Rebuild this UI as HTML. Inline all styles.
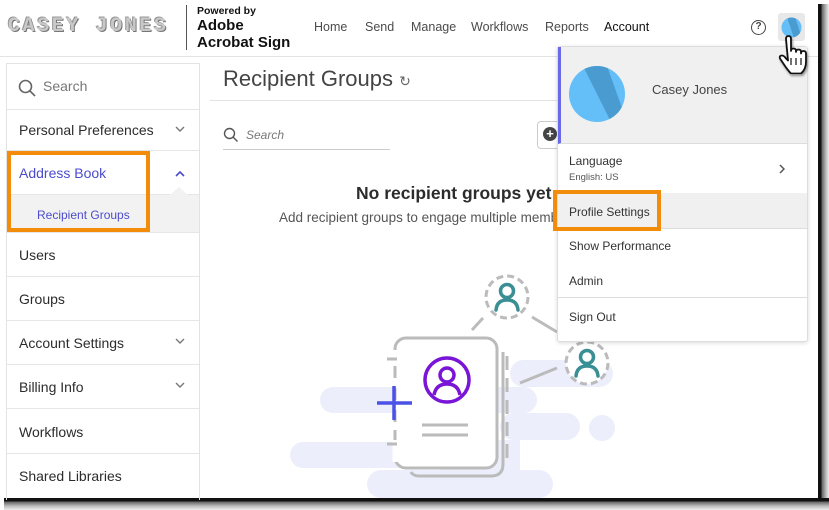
<!DOCTYPE html>
<html><head><meta charset="utf-8"><style>
*{box-sizing:border-box;margin:0;padding:0}
body{width:829px;height:510px;position:relative;overflow:hidden;background:#fff;font-family:"Liberation Sans",sans-serif;color:#2c2c2c}
.a{position:absolute}
.nav{font-size:12.5px;color:#4b4b4b;top:20px}
.row{position:absolute;left:7px;width:192px;height:44px;border-bottom:1px solid #e6e6e6;font-size:14px;padding:14px 0 0 12px;color:#2c2c2c}
.chev{position:absolute;right:14px;top:17px}
.dd{font-size:12px;color:#333;left:569px}
</style></head><body>
<div class="a" style="left:818px;top:4px;width:11px;height:506px;background:linear-gradient(90deg,#111 0,#111 3px,#666 4px,#bbb 8px,#eee 11px)"></div>
<div class="a" style="left:4px;top:498px;width:825px;height:12px;background:linear-gradient(180deg,#111 0,#111 3px,#666 4px,#bbb 8px,#eee 12px)"></div>
<div class="a" style="left:8px;top:15px;font:bold 20px 'Liberation Mono',monospace;letter-spacing:2.6px;color:#c8c8c8;text-shadow:1px 1px 0 #777,-1px -1px 0 #999">CASEY JONES</div>
<div class="a" style="left:186px;top:5px;width:1px;height:45px;background:#555"></div>
<div class="a" style="left:197px;top:5px;font-size:10.5px;font-weight:bold;color:#111">Powered by</div>
<div class="a" style="left:197px;top:17px;font-size:15px;font-weight:bold;line-height:17px;color:#111">Adobe<br>Acrobat Sign</div>
<div class="a nav" style="left:314px">Home</div>
<div class="a nav" style="left:365px">Send</div>
<div class="a nav" style="left:411px">Manage</div>
<div class="a nav" style="left:471px">Workflows</div>
<div class="a nav" style="left:545px">Reports</div>
<div class="a nav" style="left:604px;color:#111">Account</div>
<div class="a" style="left:751px;top:20px;width:15px;height:15px;border:1.5px solid #444;border-radius:50%;font-size:10px;text-align:center;line-height:12px;font-weight:bold;color:#444">?</div>
<div class="a" style="left:778px;top:13px;width:27px;height:28px;background:#e8e8e8;border-radius:3px"></div>
<svg class="a" style="left:781px;top:17px" width="21" height="21" viewBox="0 0 21 21"><clipPath id="c1"><circle cx="10.5" cy="10.5" r="10"/></clipPath><g clip-path="url(#c1)"><rect width="21" height="21" fill="#64bef8"/><polygon points="6,0 14,0 21,21 13,21" fill="#4a9bd0"/></g></svg>
<div class="a" style="left:0;top:56px;width:818px;height:1px;background:#e3e3e3"></div>
<!-- sidebar -->
<div class="a" style="left:6px;top:63px;width:194px;height:437px;border:1px solid #e3e3e3;border-bottom:none"></div>
<div class="row" style="top:64px;height:46px;color:#777;padding-left:36px">Search</div>
<svg class="a" style="left:18px;top:79px" width="18" height="18" viewBox="0 0 18 18"><circle cx="7.5" cy="7.5" r="6" fill="none" stroke="#666" stroke-width="1.6"/><path d="M12 12l5 5" stroke="#666" stroke-width="1.6"/></svg>
<div class="row" style="top:110px;height:41px;padding-top:12px">Personal Preferences<svg class="chev" style="top:16px" width="10" height="6"><path d="M1 1l4 4 4-4" fill="none" stroke="#777" stroke-width="1.4"/></svg></div>
<div class="row" style="top:151px;color:#4c4ccc">Address Book<svg class="chev" style="top:20px" width="10" height="6"><path d="M1 5l4-4 4 4" fill="none" stroke="#4c4ccc" stroke-width="1.6"/></svg></div>
<div class="a" style="left:7px;top:195px;width:192px;height:38px;background:#f2f2f2;border-bottom:1px solid #e6e6e6;font-size:12px;color:#4c4ccc;padding:13px 0 0 30px">Recipient Groups</div>
<div class="a" style="left:170px;top:187px;width:0;height:0;border-left:9px solid transparent;border-right:9px solid transparent;border-bottom:8px solid #f2f2f2"></div>
<div class="row" style="top:233px">Users</div>
<div class="row" style="top:277px">Groups</div>
<div class="row" style="top:321px">Account Settings<svg class="chev" width="10" height="6"><path d="M1 1l4 4 4-4" fill="none" stroke="#777" stroke-width="1.4"/></svg></div>
<div class="row" style="top:365px">Billing Info<svg class="chev" width="10" height="6"><path d="M1 1l4 4 4-4" fill="none" stroke="#777" stroke-width="1.4"/></svg></div>
<div class="row" style="top:410px">Workflows</div>
<div class="row" style="top:454px;border:none">Shared Libraries</div>
<div class="a" style="left:7px;top:151px;width:143px;height:81px;border:4px solid #f38b0b"></div>
<!-- main -->
<div class="a" style="left:223px;top:66px;font-size:22px;color:#444">Recipient Groups <span style="font-size:14px;color:#666">&#8635;</span></div>
<div class="a" style="left:210px;top:100px;width:350px;height:1px;background:#e3e3e3"></div>
<svg class="a" style="left:223px;top:127px" width="16" height="16" viewBox="0 0 16 16"><circle cx="6.5" cy="6.5" r="5" fill="none" stroke="#555" stroke-width="1.4"/><path d="M10 10l4.5 4.5" stroke="#555" stroke-width="1.4"/></svg>
<div class="a" style="left:246px;top:128px;font-size:12px;font-style:italic;color:#777">Search</div>
<div class="a" style="left:223px;top:149px;width:167px;height:1px;background:#ccc"></div>
<div class="a" style="left:537px;top:121px;width:24px;height:28px;border:1px solid #ccc;border-radius:4px 0 0 4px"></div>
<div class="a" style="left:543px;top:127px;width:14px;height:14px;border-radius:50%;background:#444;color:#fff;font-size:13px;line-height:14px;text-align:center;font-weight:bold">+</div>
<div class="a" style="left:356px;top:183px;font-size:17.5px;font-weight:bold;color:#2c2c2c">No recipient groups yet</div>
<div class="a" style="left:279px;top:210px;font-size:13.5px;color:#555">Add recipient groups to engage multiple memb</div>
<!-- illustration (page coords) -->
<svg class="a" style="left:280px;top:260px" width="340" height="240" viewBox="280 260 340 240">
<g fill="#eceefb">
<rect x="320" y="387" width="217" height="26" rx="13"/><rect x="290" y="442" width="177" height="26" rx="13"/><rect x="367" y="470" width="186" height="28" rx="14"/><rect x="510" y="360" width="103" height="27" rx="13.5"/><rect x="500" y="413" width="80" height="27" rx="13.5"/><circle cx="602" cy="428" r="13"/><rect x="440" y="440" width="80" height="30"/>
</g>
<path d="M472 330 L483 318 M532 317 L557 332 M520 383 L557 368" stroke="#bbb" stroke-width="3"/>
<circle cx="507" cy="297" r="21" fill="#fff" stroke="#bbb" stroke-width="3" stroke-dasharray="7 4"/>
<circle cx="587" cy="363" r="21" fill="#fff" stroke="#bbb" stroke-width="3" stroke-dasharray="7 4"/>
<g fill="none" stroke="#3a8f95" stroke-width="3.5" stroke-linecap="round"><circle cx="507" cy="291" r="6.5"/><path d="M496 310 q1-10 11-10 q10 0 11 10"/><circle cx="587" cy="357" r="6.5"/><path d="M576 376 q1-10 11-10 q10 0 11 10"/></g>
<path d="M503 352 v112 q0 12-12 12 h-72 q-6 0-8-4" fill="none" stroke="#bbb" stroke-width="3"/>
<rect x="395" y="338" width="102" height="130" rx="11" fill="#fff" stroke="#bbb" stroke-width="3"/>
<path d="M395 350 v112" stroke="#fff" stroke-width="5"/>
<path d="M387 359 h10 M387 444 h10 M395 366 v12 M395 388 v12 M395 410 v12 M395 430 v10" stroke="#bbb" stroke-width="3"/>
<path d="M507 356 v14 M507 378 v14 M507 400 v14 M507 422 v14 M507 444 v14" stroke="#bbb" stroke-width="3"/>
<circle cx="447" cy="380" r="22" fill="none" stroke="#7a14d6" stroke-width="3.5"/>
<g fill="none" stroke="#7a14d6" stroke-width="3.5"><circle cx="447" cy="375" r="7"/><path d="M434 395 q2-11 13-11 q11 0 13 11"/></g>
<path d="M422 425 h46 M422 435 h46" stroke="#bbb" stroke-width="3"/>
<path d="M377 403 h35 M394 386 v34" stroke="#4b52e6" stroke-width="3.5"/>
</svg>
<!-- dropdown -->
<div class="a" style="left:557px;top:46px;width:251px;height:296px;background:#fff;border:1px solid #ddd;border-radius:3px;box-shadow:0 1px 4px rgba(0,0,0,.15)"></div>
<div class="a" style="left:558px;top:47px;width:249px;height:97px;background:#f0f0f0;border-left:3px solid #6a6ae8;border-bottom:1px solid #ddd"></div>
<svg class="a" style="left:569px;top:66px" width="56" height="56" viewBox="0 0 56 56"><clipPath id="c2"><circle cx="28" cy="28" r="28"/></clipPath><g clip-path="url(#c2)"><rect width="56" height="56" fill="#64bef8"/><polygon points="14,0 38,0 58,56 42,56" fill="#4a9bd0"/></g></svg>
<div class="a" style="left:652px;top:82px;font-size:13px;color:#444">Casey Jones</div>
<div class="a dd" style="top:154px">Language</div>
<div class="a" style="left:569px;top:172px;font-size:9.5px;color:#555">English: US</div>
<svg class="a" style="left:779px;top:164px" width="6" height="10"><path d="M1 1l4 4-4 4" fill="none" stroke="#555" stroke-width="1.5"/></svg>
<div class="a" style="left:558px;top:193px;width:249px;height:36px;background:#f0f0f0;border-bottom:1px solid #ddd"></div>
<div class="a dd" style="top:205px">Profile Settings</div>
<div class="a dd" style="top:239px">Show Performance</div>
<div class="a dd" style="top:274px">Admin</div>
<div class="a" style="left:558px;top:297px;width:249px;height:1px;background:#ddd"></div>
<div class="a dd" style="top:310px">Sign Out</div>
<div class="a" style="left:553px;top:190px;width:108px;height:41px;border:4px solid #f38b0b"></div>
<!-- cursor -->
<svg class="a" style="left:778px;top:34px;filter:drop-shadow(1px 2px 1px rgba(0,0,0,.4))" width="30" height="40" viewBox="0 0 30 40"><path d="M8 5 q0-3 2.5-3 t2.5 3 v12 q0-2.5 2.5-2.5 t2.5 2.5 v1 q0-2.5 2.5-2.5 t2.5 2.5 v1.5 q0-2.5 2.5-2.5 t2.5 2.5 v8 q0 8-5 12 h-10 q-3-3-7-9 l-4-6 q-1-3 2-3 q2 0 4 3 l2 2z" fill="#fff" stroke="#111" stroke-width="1.8" stroke-linejoin="round"/><path d="M13 24v7 M18 24v7 M23 24v7" stroke="#111" stroke-width="1.2"/></svg>
</body></html>
